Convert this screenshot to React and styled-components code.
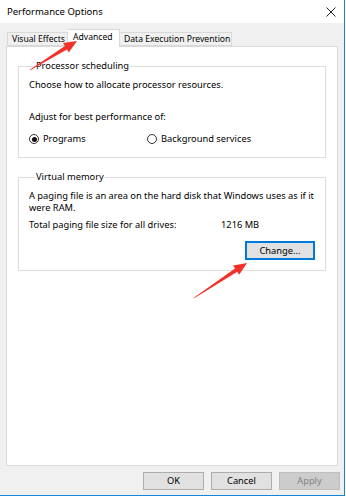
import styled, { createGlobalStyle } from 'styled-components';

const GlobalStyle = createGlobalStyle`
    html, body {
        margin: 0;
        padding: 0;
        background: #ffffff;
    }
    body {
        font-family: "Noto Sans", "Open Sans", sans-serif;
        font-size: 9.3px;
        color: #000;
    }
`

const Window = styled.div`
    position: relative;
    width: 345px;
    height: 496px;
    box-sizing: border-box;
    background: #f0f0f0;
    border-right: 1px solid #1883d7;
    border-bottom: 1px solid #1883d7;
    display: flex;
    flex-direction: column;
`

const TitleBar = styled.div`
    height: 23px;
    background: #ffffff;
    display: flex;
    align-items: center;
    justify-content: space-between;
    padding: 0 7px;
    font-size: 9.5px;
    line-height: 12px;
`

const CloseIcon = styled.svg`
    width: 10px;
    height: 10px;
    margin-right: 1px;
`

const TabStrip = styled.div`
    display: flex;
    align-items: flex-end;
    height: 17px;
    margin: 6px 0 0 7px;
`

const Tab = styled.div`
    box-sizing: border-box;
    width: ${p => p.w}px;
    height: ${p => p.active ? 18 : 14}px;
    margin-bottom: ${p => p.active ? -1 : 0}px;
    position: relative;
    z-index: ${p => p.active ? 2 : 1};
    background: ${p => p.active ? '#ffffff' : '#f0f0f0'};
    border: 1px solid #d9d9d9;
    border-bottom: ${p => p.active ? 'none' : '1px solid #d9d9d9'};
    padding-left: ${p => p.pad}px;
    font-size: 8.6px;
    line-height: ${p => p.active ? 14 : 12}px;
    white-space: nowrap;
    overflow: hidden;
    & + & {
        border-left: ${p => p.active ? '1px solid #d9d9d9' : 'none'};
    }
`

const Panel = styled.div`
    position: relative;
    z-index: 1;
    height: 420px;
    box-sizing: border-box;
    margin: 0 6px 0 6px;
    background: #ffffff;
    border: 1px solid #d9d9d9;
    padding: 13px 11px 0 11px;
    display: flex;
    flex-direction: column;
`

const Group = styled.fieldset`
    margin: ${p => p.gap}px 0 0 0;
    padding: 7px 10px ${p => p.bottom}px 10px;
    border: 1px solid #dcdcdc;
    min-width: 0;
    line-height: 12px;
    legend {
        padding: 0 1px;
        margin-left: 6px;
        line-height: 12px;
    }
`

const Line = styled.div`
    margin-top: ${p => p.top || 0}px;
    line-height: ${p => p.lh || 12}px;
    white-space: nowrap;
`

const RadioRow = styled.div`
    display: grid;
    grid-template-columns: 118px auto;
    margin-top: 10px;
`

const Radio = styled.label`
    display: flex;
    align-items: center;
    gap: 4px;
    line-height: 12px;
`

const RadioDot = styled.span`
    width: 10px;
    height: 10px;
    box-sizing: border-box;
    border: 1px solid #333;
    border-radius: 50%;
    display: flex;
    align-items: center;
    justify-content: center;
    &::after {
        content: '';
        width: 5px;
        height: 5px;
        border-radius: 50%;
        background: #111;
        display: ${p => p.checked ? 'block' : 'none'};
    }
`

const SizeRow = styled.div`
    display: grid;
    grid-template-columns: 192px auto;
    margin-top: 6px;
    line-height: 12px;
`

const ButtonRow = styled.div`
    display: flex;
    justify-content: flex-end;
    gap: ${p => p.gap}px;
    margin-top: ${p => p.top}px;
    padding-right: ${p => p.right}px;
`

const Button = styled.button`
    box-sizing: border-box;
    width: ${p => p.w}px;
    height: ${p => p.h}px;
    font-family: inherit;
    font-size: 9.3px;
    line-height: 12px;
    padding: 0;
    background: ${p => p.disabled ? '#cccccc' : '#e1e1e1'};
    color: ${p => p.disabled ? '#838383' : '#000'};
    border: 1px solid ${p => p.primary ? '#0078d7' : p.disabled ? '#bfbfbf' : '#adadad'};
    box-shadow: ${p => p.primary ? 'inset 0 0 0 1px #0078d7' : 'none'};
`

const ArrowLayer = styled.svg`
    position: absolute;
    left: 0;
    top: 0;
    width: 346px;
    height: 497px;
    pointer-events: none;
    z-index: 5;
`

// tapered red pointer arrow from tail to tip
const arrowPoints = (x1, y1, x2, y2) => {
    const dx = x2 - x1, dy = y2 - y1;
    const len = Math.hypot(dx, dy);
    const ux = dx / len, uy = dy / len;
    const nx = -uy, ny = ux;
    const head = 13, hw = 5.5, sw = 2;
    const bx = x2 - ux * head, by = y2 - uy * head;
    const pts = [
        [x1 + nx * 0.4, y1 + ny * 0.4],
        [bx + nx * sw, by + ny * sw],
        [bx + nx * hw, by + ny * hw],
        [x2, y2],
        [bx - nx * hw, by - ny * hw],
        [bx - nx * sw, by - ny * sw],
        [x1 - nx * 0.4, y1 - ny * 0.4],
    ];
    return pts.map(p => p.map(v => v.toFixed(1)).join(',')).join(' ');
};

const App = () => {
    return (
        <>
            <GlobalStyle />
            <Window>
                <TitleBar>
                    <span>Performance Options</span>
                    <CloseIcon viewBox="0 0 10 10">
                        <path d="M0.5 0.5 L9.5 9.5 M9.5 0.5 L0.5 9.5" stroke="#222" strokeWidth="1" fill="none" />
                    </CloseIcon>
                </TitleBar>

                <TabStrip>
                    <Tab w={61} pad={4}>Visual Effects</Tab>
                    <Tab w={52} pad={5} active>Advanced</Tab>
                    <Tab w={112} pad={4}>Data Execution Prevention</Tab>
                </TabStrip>

                <Panel>
                    <Group gap={0} bottom={12}>
                        <legend>Processor scheduling</legend>
                        <Line>Choose how to allocate processor resources.</Line>
                        <Line top={20}>Adjust for best performance of:</Line>
                        <RadioRow>
                            <Radio><RadioDot checked />Programs</Radio>
                            <Radio><RadioDot />Background services</Radio>
                        </RadioRow>
                    </Group>

                    <Group gap={13} bottom={10}>
                        <legend>Virtual memory</legend>
                        <Line lh={11.5}>
                            A paging file is an area on the hard disk that Windows uses as if it<br />
                            were RAM.
                        </Line>
                        <SizeRow>
                            <span>Total paging file size for all drives:</span>
                            <span>1216 MB</span>
                        </SizeRow>
                        <ButtonRow gap={0} top={10} right={0}>
                            <Button w={70} h={19} primary>Change...</Button>
                        </ButtonRow>
                    </Group>
                </Panel>

                <ButtonRow gap={7} top={6} right={4}>
                    <Button w={61} h={18}>OK</Button>
                    <Button w={61} h={18}>Cancel</Button>
                    <Button w={61} h={18} disabled>Apply</Button>
                </ButtonRow>

                <ArrowLayer viewBox="0 0 346 497">
                    <polygon points={arrowPoints(30, 70, 77, 41)} fill="#f2322a" />
                    <polygon points={arrowPoints(194, 298, 247, 263)} fill="#f2322a" />
                </ArrowLayer>
            </Window>
        </>
    );
};

export default App;
